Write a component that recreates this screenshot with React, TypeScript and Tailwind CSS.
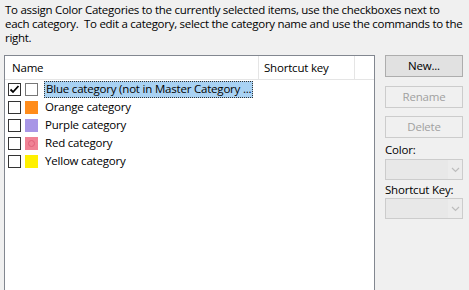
import React from 'react';

type Category = { name: string; color: string | null; checked: boolean; selected?: boolean; pattern?: boolean };

const categories: Category[] = [
  { name: 'Blue category (not in Master Category ...', color: null, checked: true, selected: true },
  { name: 'Orange category', color: '#ff8c1a', checked: false },
  { name: 'Purple category', color: '#a896e6', checked: false },
  { name: 'Red category', color: '#f08294', checked: false, pattern: true },
  { name: 'Yellow category', color: '#fff000', checked: false },
];

const Checkbox: React.FC<{ checked: boolean }> = ({ checked }) => (
  <div className="w-[13px] h-[13px] border border-[#333] bg-white flex items-center justify-center shrink-0">
    {checked && (
      <svg width="11" height="11" viewBox="0 0 11 11">
        <path d="M1.5 5.5 L4 8 L9.5 2" fill="none" stroke="#000" strokeWidth="1.8" />
      </svg>
    )}
  </div>
);

const Swatch: React.FC<{ color: string | null; pattern?: boolean }> = ({ color, pattern }) =>
  color ? (
    <div
      className="w-[13px] h-[13px] shrink-0 flex items-center justify-center"
      style={{ backgroundColor: color }}
    >
      {pattern && <div className="w-[7px] h-[7px] rounded-full border border-[#e0607a]" />}
    </div>
  ) : (
    <div className="w-[13px] h-[13px] shrink-0 border border-[#777] bg-white" />
  );

const DisabledSelect: React.FC = () => (
  <div className="h-[21px] border border-[#cccccc] bg-[#e8e8e8] flex justify-end">
    <div className="w-[14px] flex items-center justify-center bg-[#ececec]">
      <svg width="9" height="6" viewBox="0 0 9 6">
        <path d="M1 1 L4.5 4.5 L8 1" fill="none" stroke="#bdbdbd" strokeWidth="1.2" />
      </svg>
    </div>
  </div>
);

const App: React.FC = () => {
  return (
    <div
      className="w-[469px] h-[290px] overflow-hidden bg-[#f0f0f0] text-[11.5px] text-black tracking-[-0.2px]"
      style={{ fontFamily: '"Segoe UI", "Open Sans", "Noto Sans", sans-serif' }}
    >
      {/* Instructions */}
      <p className="px-[5px] pt-[3px] leading-[14px] whitespace-nowrap tracking-[-0.28px]">
        To assign Color Categories to the currently selected items, use the checkboxes next to
        <br />
        each category.&nbsp; To edit a category, select the category name and use the commands to the
        <br />
        right.
      </p>

      <div className="flex gap-[10px] pl-[4px] pr-[6px] mt-[10px]">
        {/* Category list */}
        <div className="w-[371px] h-[260px] border border-[#828790] bg-white shrink-0">
          <div className="flex h-[24px] items-center border-b border-[#e5e5e5]">
            <div className="w-[254px] h-full flex items-center pl-[7px] border-r border-[#e5e5e5]">Name</div>
            <div className="w-[96px] h-full flex items-center pl-[5px] border-r border-[#e5e5e5]">Shortcut key</div>
          </div>
          {categories.map((c) => (
            <div key={c.name} className="flex items-center h-[18px] pl-[3px]">
              <Checkbox checked={c.checked} />
              <div className="ml-[4px]">
                <Swatch color={c.color} pattern={c.pattern} />
              </div>
              <div
                className={
                  c.selected
                    ? 'ml-[6px] w-[209px] h-[17px] flex items-center pl-[1px] bg-[#a9d2f3] border border-dotted border-[#333] whitespace-nowrap overflow-hidden'
                    : 'ml-[7px] whitespace-nowrap'
                }
              >
                {c.name}
              </div>
            </div>
          ))}
        </div>

        {/* Commands */}
        <div className="w-[78px] flex flex-col">
          <button className="h-[22px] border border-[#adadad] bg-[#e1e1e1] text-black">New...</button>
          <button className="h-[22px] mt-[9px] border border-[#cccccc] bg-[#f0f0f0] text-[#a0a0a0]">Rename</button>
          <button className="h-[22px] mt-[8px] border border-[#cccccc] bg-[#f0f0f0] text-[#a0a0a0]">Delete</button>
          <div className="mt-[3px] leading-[18px]">Color:</div>
          <DisabledSelect />
          <div className="mt-[1px] leading-[17px]">Shortcut Key:</div>
          <DisabledSelect />
        </div>
      </div>
    </div>
  );
};

export default App;
